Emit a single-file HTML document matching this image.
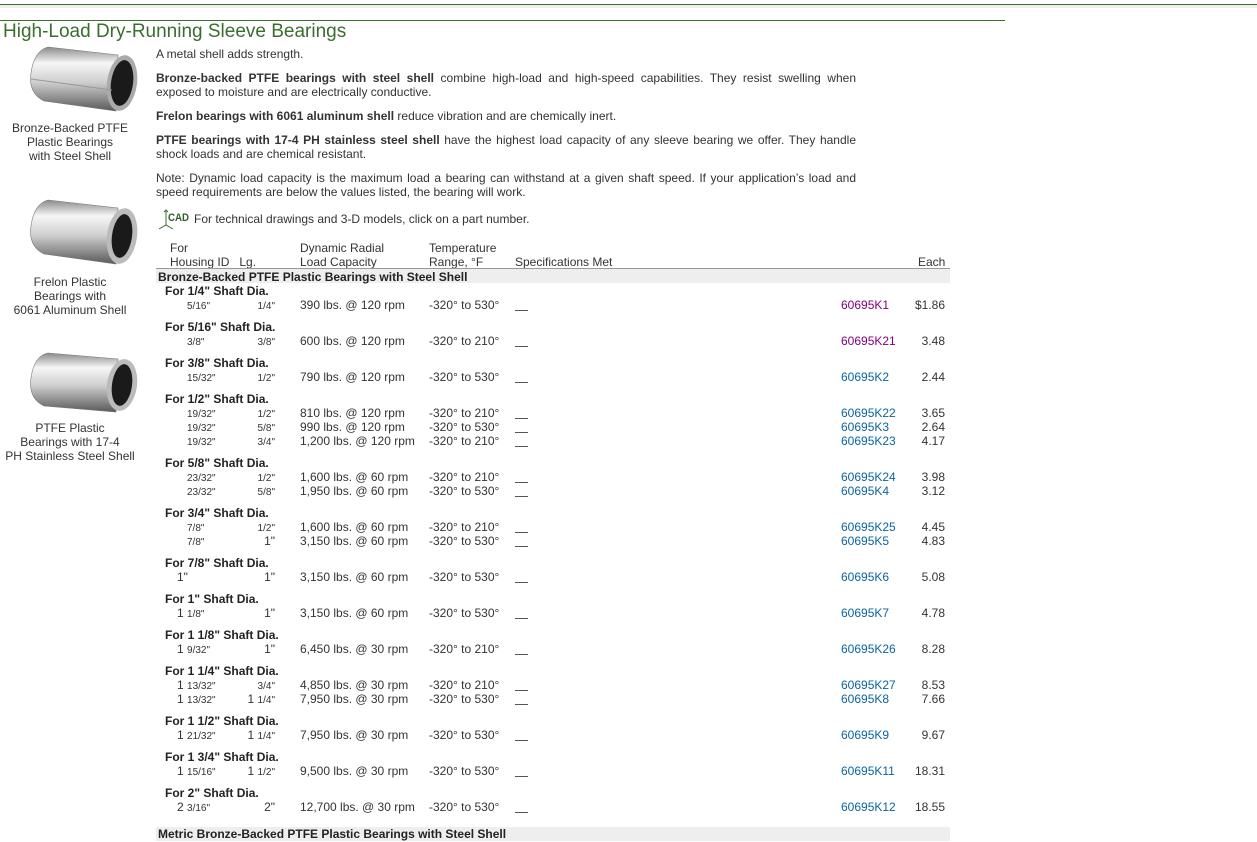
<!DOCTYPE html>
<html><head><meta charset="utf-8"><style>
body{margin:0;width:1257px;height:842px;background:#fff;font-family:"Liberation Sans",Arial,sans-serif;color:#333;font-size:12px;position:relative;overflow:hidden}
.a{position:absolute;white-space:nowrap;line-height:14px}
.r{text-align:right}
.b{font-weight:bold}
.f{font-size:10px}
.p{color:#0a64a0}
.v{color:#800080}
.u{position:absolute;width:13px;border-top:1px solid #555}
p{margin:0}
</style></head><body>
<div style="position:absolute;left:0;top:4px;width:1257px;height:1px;background:#3a6e2e"></div>
<div style="position:absolute;left:0;top:5px;width:1257px;height:3px;background:#eee"></div>
<div style="position:absolute;left:0;top:20px;width:1005px;height:1px;background:#3a6e2e"></div>
<div class="a" style="left:3px;top:21px;font-size:19px;line-height:22px;color:#3a6e2e">High-Load Dry-Running Sleeve Bearings</div>

<svg width="0" height="0" style="position:absolute"><defs><linearGradient id="g" x1="0" y1="0" x2="0" y2="1"><stop offset="0" stop-color="#8a8a8a"/><stop offset=".25" stop-color="#f6f6f6"/><stop offset=".55" stop-color="#cfcfcf"/><stop offset="1" stop-color="#5a5a5a"/></linearGradient></defs></svg>
<svg style="position:absolute;left:28px;top:45px" width="112" height="70" viewBox="0 0 112 70">
<path d="M20 2 L90 10 L88 66 L16 56 Q0 48 3 28 Q6 6 20 2Z" fill="url(#g)" stroke="#777" stroke-width=".6"/>
<ellipse cx="94" cy="38" rx="15" ry="28" fill="#aaa" transform="rotate(8 94 38)"/>
<ellipse cx="94" cy="38" rx="11" ry="23" fill="#1a1a1a" transform="rotate(8 94 38)"/>
<line x1="3" y1="34" x2="84" y2="45" stroke="#999"/>
</svg>
<svg style="position:absolute;left:28px;top:198px" width="112" height="70" viewBox="0 0 112 70">
<path d="M20 2 L90 10 L88 66 L16 56 Q0 48 3 28 Q6 6 20 2Z" fill="url(#g)" stroke="#777" stroke-width=".6"/>
<ellipse cx="94" cy="38" rx="15" ry="28" fill="#bbb" transform="rotate(8 94 38)"/>
<ellipse cx="94" cy="38" rx="10" ry="22" fill="#1a1a1a" transform="rotate(8 94 38)"/>
</svg>
<svg style="position:absolute;left:28px;top:350px" width="112" height="66" viewBox="0 0 112 66">
<path d="M20 3 L90 9 L88 62 L16 56 Q0 48 3 28 Q6 6 20 3Z" fill="url(#g)" stroke="#777" stroke-width=".6"/>
<ellipse cx="94" cy="35" rx="15" ry="26" fill="#bbb" transform="rotate(8 94 35)"/>
<ellipse cx="94" cy="35" rx="10" ry="21" fill="#1a1a1a" transform="rotate(8 94 35)"/>
</svg>
<div class="a" style="left:0;width:140px;text-align:center;top:121px">Bronze-Backed PTFE<br>Plastic Bearings<br>with Steel Shell</div>
<div class="a" style="left:0;width:140px;text-align:center;top:275px">Frelon Plastic<br>Bearings with<br>6061 Aluminum Shell</div>
<div class="a" style="left:0;width:140px;text-align:center;top:421px">PTFE Plastic<br>Bearings with 17-4<br>PH Stainless Steel Shell</div>

<div style="position:absolute;left:156px;top:47px;width:700px;line-height:14px;text-align:justify">
<p>A metal shell adds strength.</p>
<p style="margin-top:10px"><b>Bronze-backed PTFE bearings with steel shell</b> combine high-load and high-speed capabilities. They resist swelling when exposed to moisture and are electrically conductive.</p>
<p style="margin-top:10px"><b>Frelon bearings with 6061 aluminum shell</b> reduce vibration and are chemically inert.</p>
<p style="margin-top:10px"><b>PTFE bearings with 17-4 PH stainless steel shell</b> have the highest load capacity of any sleeve bearing we offer. They handle shock loads and are chemical resistant.</p>
<p style="margin-top:10px">Note: Dynamic load capacity is the maximum load a bearing can withstand at a given shaft speed. If your application’s load and speed requirements are below the values listed, the bearing will work.</p>
</div>
<svg style="position:absolute;left:157px;top:208px" width="36" height="22"><path d="M9 3 V17 M2 21 L9 17 L16 21 M7 4 L9 2 L11 4" stroke="#3a6e2e" fill="none"/><text x="11" y="13" font-family="Liberation Sans" font-weight="bold" font-size="11" textLength="21" lengthAdjust="spacingAndGlyphs" fill="#2e5e28">CAD</text></svg>
<div class="a" style="left:194px;top:212px">For technical drawings and 3-D models, click on a part number.</div>

<div class="a" style="left:170px;top:241px">For<br>Housing ID&nbsp;&nbsp; Lg.</div>
<div class="a" style="left:300px;top:241px">Dynamic Radial<br>Load Capacity</div>
<div class="a" style="left:429px;top:241px">Temperature<br>Range, °F</div>
<div class="a" style="left:515px;top:255px">Specifications Met</div>
<div class="a" style="left:918px;top:255px">Each</div>
<div style="position:absolute;left:156px;top:268px;width:794px;height:1px;background:#999"></div>
<div style="position:absolute;left:156px;top:269px;width:794px;height:14px;background:#eee"></div>
<div class="a b" style="left:158px;top:270px;color:#222">Bronze-Backed PTFE Plastic Bearings with Steel Shell</div>
<div style="position:absolute;left:156px;top:827px;width:794px;height:14px;background:#eee"></div>
<div class="a b" style="left:158px;top:827px;color:#222">Metric Bronze-Backed PTFE Plastic Bearings with Steel Shell</div>

<div id="t"></div>
<script>
var G=[
["For 1/4\" Shaft Dia.",284,[['<span class=f>5/16"</span>','<span class=f>1/4"</span>',"390 lbs. @ 120 rpm","-320° to 530°","60695K1","$1.86",1]]],
["For 5/16\" Shaft Dia.",320,[['<span class=f>3/8"</span>','<span class=f>3/8"</span>',"600 lbs. @ 120 rpm","-320° to 210°","60695K21","3.48",1]]],
["For 3/8\" Shaft Dia.",356,[['<span class=f>15/32"</span>','<span class=f>1/2"</span>',"790 lbs. @ 120 rpm","-320° to 530°","60695K2","2.44"]]],
["For 1/2\" Shaft Dia.",392,[['<span class=f>19/32"</span>','<span class=f>1/2"</span>',"810 lbs. @ 120 rpm","-320° to 210°","60695K22","3.65"],['<span class=f>19/32"</span>','<span class=f>5/8"</span>',"990 lbs. @ 120 rpm","-320° to 530°","60695K3","2.64"],['<span class=f>19/32"</span>','<span class=f>3/4"</span>',"1,200 lbs. @ 120 rpm","-320° to 210°","60695K23","4.17"]]],
["For 5/8\" Shaft Dia.",456,[['<span class=f>23/32"</span>','<span class=f>1/2"</span>',"1,600 lbs. @ 60 rpm","-320° to 210°","60695K24","3.98"],['<span class=f>23/32"</span>','<span class=f>5/8"</span>',"1,950 lbs. @ 60 rpm","-320° to 530°","60695K4","3.12"]]],
["For 3/4\" Shaft Dia.",506,[['<span class=f>7/8"</span>','<span class=f>1/2"</span>',"1,600 lbs. @ 60 rpm","-320° to 210°","60695K25","4.45"],['<span class=f>7/8"</span>','1"',"3,150 lbs. @ 60 rpm","-320° to 530°","60695K5","4.83"]]],
["For 7/8\" Shaft Dia.",556,[['1"','1"',"3,150 lbs. @ 60 rpm","-320° to 530°","60695K6","5.08"]]],
["For 1\" Shaft Dia.",592,[['1 <span class=f>1/8"</span>','1"',"3,150 lbs. @ 60 rpm","-320° to 530°","60695K7","4.78"]]],
["For 1 1/8\" Shaft Dia.",628,[['1 <span class=f>9/32"</span>','1"',"6,450 lbs. @ 30 rpm","-320° to 210°","60695K26","8.28"]]],
["For 1 1/4\" Shaft Dia.",664,[['1 <span class=f>13/32"</span>','<span class=f>3/4"</span>',"4,850 lbs. @ 30 rpm","-320° to 210°","60695K27","8.53"],['1 <span class=f>13/32"</span>','1 <span class=f>1/4"</span>',"7,950 lbs. @ 30 rpm","-320° to 530°","60695K8","7.66"]]],
["For 1 1/2\" Shaft Dia.",714,[['1 <span class=f>21/32"</span>','1 <span class=f>1/4"</span>',"7,950 lbs. @ 30 rpm","-320° to 530°","60695K9","9.67"]]],
["For 1 3/4\" Shaft Dia.",750,[['1 <span class=f>15/16"</span>','1 <span class=f>1/2"</span>',"9,500 lbs. @ 30 rpm","-320° to 530°","60695K11","18.31"]]],
["For 2\" Shaft Dia.",786,[['2 <span class=f>3/16"</span>','2"',"12,700 lbs. @ 30 rpm","-320° to 530°","60695K12","18.55"]]]
];
var h="";
G.forEach(function(g){
 h+='<div class="a b" style="left:165px;top:'+g[1]+'px;color:#222">'+g[0]+'</div>';
 g[2].forEach(function(r,i){
  var y=g[1]+14+i*14;
  var l=r[0].indexOf("1 ")==0||r[0].indexOf("2 ")==0||r[0]=='1"'?177:187;
  h+='<div class="a" style="left:'+l+'px;top:'+y+'px">'+r[0]+'</div>';
  h+='<div class="a r" style="left:200px;width:75px;top:'+y+'px">'+r[1]+'</div>';
  h+='<div class="a" style="left:300px;top:'+y+'px">'+r[2]+'</div>';
  h+='<div class="a" style="left:429px;top:'+y+'px">'+r[3]+'</div>';
  h+='<div class="u" style="left:515px;top:'+(y+12)+'px"></div>';
  h+='<div class="a '+(r[6]?'v':'p')+'" style="left:841px;top:'+y+'px">'+r[4]+'</div>';
  h+='<div class="a r" style="left:895px;width:50px;top:'+y+'px">'+r[5]+'</div>';
 });
});
document.getElementById("t").innerHTML=h;
</script>
</body></html>
